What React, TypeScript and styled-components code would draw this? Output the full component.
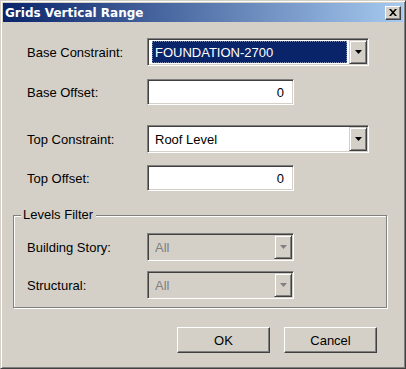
import React from 'react'
import styled, { createGlobalStyle } from 'styled-components'

const GlobalStyle = createGlobalStyle`
    html, body {
        margin: 0;
        padding: 0;
        background: #d4d0c8;
    }
    body {
        font-family: "Liberation Sans", Arial, sans-serif;
        font-size: 13px;
        color: #000;
    }
`;

interface ComboProps {
    value: string
    width: number
    selected?: boolean
    disabled?: boolean
}

const ComboBox = ({ value, width, selected, disabled }: ComboProps) => (
    <Sunken $width={width} $disabled={disabled}>
        <ComboValue $selected={selected} $disabled={disabled}>
            <span>{value}</span>
        </ComboValue>
        <DropButton>
            <svg width="7" height="4" viewBox="0 0 7 4">
                <path d="M0 0h7l-3.5 4z" fill={disabled ? '#808080' : '#000'} />
            </svg>
        </DropButton>
    </Sunken>
)

const App = () => {
    return (
        <>
            <GlobalStyle />
            <Window>
                <TitleBar>
                    <Title>Grids Vertical Range</Title>
                    <CloseButton>
                        <svg width="8" height="7" viewBox="0 0 8 7">
                            <path d="M0 0H2L4 2.3L6 0H8L5 3.5L8 7H6L4 4.7L2 7H0L3 3.5Z" fill="#000" />
                        </svg>
                    </CloseButton>
                </TitleBar>
                <Body>
                    <Row $top={0} $height={28}>
                        <Label>Base Constraint:</Label>
                        <ComboBox value="FOUNDATION-2700" width={222} selected />
                    </Row>
                    <Row $top={13} $height={26}>
                        <Label>Base Offset:</Label>
                        <NumberField>0</NumberField>
                    </Row>
                    <Row $top={20} $height={28}>
                        <Label>Top Constraint:</Label>
                        <ComboBox value="Roof Level" width={222} />
                    </Row>
                    <Row $top={12} $height={26}>
                        <Label>Top Offset:</Label>
                        <NumberField>0</NumberField>
                    </Row>

                    <Group>
                        <Caption>Levels Filter</Caption>
                        <Row $top={0} $height={28} $inset>
                            <Label>Building Story:</Label>
                            <ComboBox value="All" width={147} disabled />
                        </Row>
                        <Row $top={10} $height={28} $inset>
                            <Label>Structural:</Label>
                            <ComboBox value="All" width={147} disabled />
                        </Row>
                    </Group>

                    <ButtonBar>
                        <PushButton>OK</PushButton>
                        <PushButton>Cancel</PushButton>
                    </ButtonBar>
                </Body>
            </Window>
        </>
    )
}

const Window = styled.div`
    width: 406px;
    height: 369px;
    box-sizing: border-box;
    background: #d4d0c8;
    border: 1px solid;
    border-color: #d4d0c8 #404040 #404040 #d4d0c8;
    box-shadow: inset 1px 1px 0 #fff, inset -1px -1px 0 #808080;
    padding: 2px;

    display: flex;
    flex-direction: column;
`;

const TitleBar = styled.div`
    height: 19px;
    padding: 0 2px 0 2px;
    background: linear-gradient(to right, #0a246a, #a6caf0);

    display: flex;
    justify-content: space-between;
    align-items: center;
`;

const Title = styled.div`
    font-family: "DejaVu Sans", Verdana, sans-serif;
    font-weight: bold;
    font-size: 12px;
    color: #fff;
    white-space: nowrap;
`;

const CloseButton = styled.div`
    width: 16px;
    height: 14px;
    box-sizing: border-box;
    background: #d4d0c8;
    border: 1px solid;
    border-color: #fff #404040 #404040 #fff;
    box-shadow: inset -1px -1px 0 #808080;

    display: flex;
    justify-content: center;
    align-items: center;
`;

const Body = styled.div`
    flex: 1;
    padding: 16px 16px 0 10px;

    display: flex;
    flex-direction: column;
`;

const Row = styled.div<{ $top: number; $height: number; $inset?: boolean }>`
    height: ${p => p.$height}px;
    margin-top: ${p => p.$top}px;
    margin-left: ${p => (p.$inset ? 6 : 14)}px;

    display: grid;
    grid-template-columns: 120px auto;
    align-items: center;
`;

const Label = styled.div`
    white-space: nowrap;
`;

const Sunken = styled.div<{ $width: number; $disabled?: boolean }>`
    width: ${p => p.$width}px;
    height: 100%;
    box-sizing: border-box;
    background: ${p => (p.$disabled ? '#d4d0c8' : '#fff')};
    border: 1px solid;
    border-color: #808080 #fff #fff #808080;
    box-shadow: inset 1px 1px 0 #404040, inset -1px -1px 0 #d4d0c8;
    padding: 1px;

    display: flex;
`;

const ComboValue = styled.div<{ $selected?: boolean; $disabled?: boolean }>`
    flex: 1;
    margin: 1px 2px 1px 3px;
    padding: 0 2px;
    box-sizing: border-box;
    background: ${p => (p.$selected ? '#0a246a' : 'transparent')};
    color: ${p => (p.$selected ? '#fff' : p.$disabled ? '#808080' : '#000')};
    border: 1px ${p => (p.$selected ? 'dotted rgba(255, 255, 255, 0.45)' : 'solid transparent')};

    display: flex;
    align-items: center;
`;

const DropButton = styled.div`
    width: 18px;
    box-sizing: border-box;
    background: #d4d0c8;
    border: 1px solid;
    border-color: #d4d0c8 #404040 #404040 #d4d0c8;
    box-shadow: inset 1px 1px 0 #fff, inset -1px -1px 0 #808080;

    display: flex;
    justify-content: center;
    align-items: center;
`;

const NumberField = styled(Sunken).attrs({ $width: 147 })`
    padding: 0 9px 0 0;
    justify-content: flex-end;
    align-items: center;
`;

const Group = styled.fieldset`
    margin: 17px 0 0 0;
    padding: 11px 0 8px 7px;
    min-width: 0;
    border: 1px solid #808080;
    box-shadow: 1px 1px 0 #fff, inset 1px 1px 0 #fff;
`;

const Caption = styled.legend`
    padding: 0 3px 0 2px;
    line-height: 14px;
    background: #d4d0c8;
`;

const ButtonBar = styled.div`
    margin: 19px 10px 0 0;

    display: flex;
    justify-content: flex-end;
    gap: 14px;
`;

const PushButton = styled.div`
    width: 93px;
    height: 26px;
    box-sizing: border-box;
    background: #d4d0c8;
    border: 1px solid;
    border-color: #fff #404040 #404040 #fff;
    box-shadow: inset -1px -1px 0 #808080;

    display: flex;
    justify-content: center;
    align-items: center;
`;

export default App
